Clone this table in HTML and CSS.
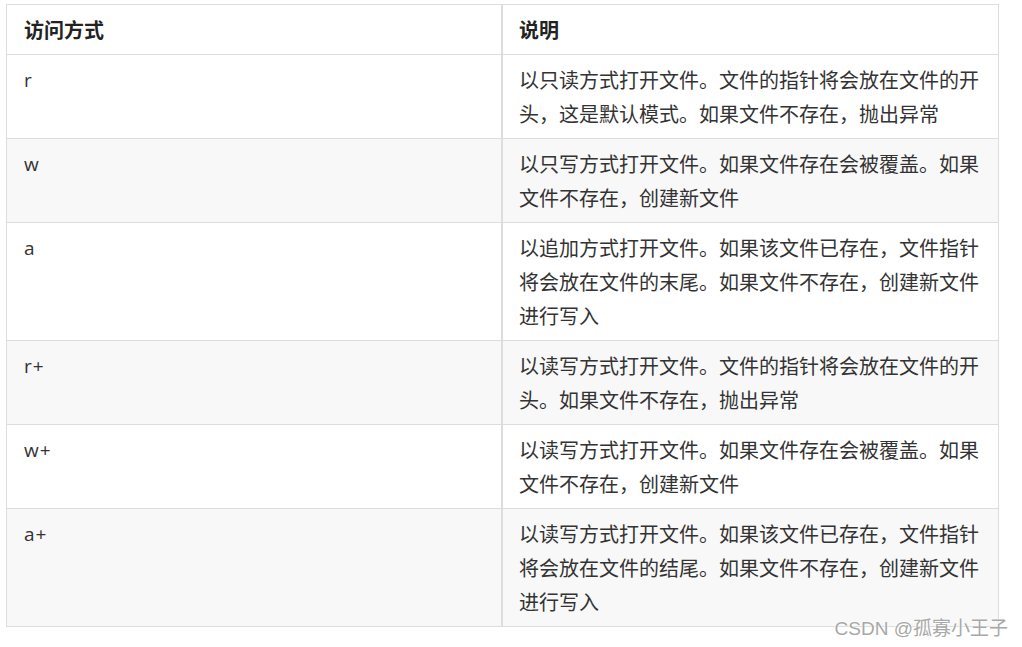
FILE: index.html
```html
<!DOCTYPE html>
<html lang="zh-CN">
<head>
<meta charset="utf-8">
<title>文件访问方式</title>
<link rel="stylesheet" href="styles.css">
</head>
<body>
<div class="page">
  <table class="modes">
    <thead>
      <tr><th>访问方式</th><th>说明</th></tr>
    </thead>
    <tbody>
      <tr><td>r</td><td>以只读方式打开文件。文件的指针将会放在文件的开头，这是默认模式。如果文件不存在，抛出异常</td></tr>
      <tr><td>w</td><td>以只写方式打开文件。如果文件存在会被覆盖。如果文件不存在，创建新文件</td></tr>
      <tr><td>a</td><td>以追加方式打开文件。如果该文件已存在，文件指针将会放在文件的末尾。如果文件不存在，创建新文件进行写入</td></tr>
      <tr><td>r+</td><td>以读写方式打开文件。文件的指针将会放在文件的开头。如果文件不存在，抛出异常</td></tr>
      <tr><td>w+</td><td>以读写方式打开文件。如果文件存在会被覆盖。如果文件不存在，创建新文件</td></tr>
      <tr><td>a+</td><td>以读写方式打开文件。如果该文件已存在，文件指针将会放在文件的结尾。如果文件不存在，创建新文件进行写入</td></tr>
    </tbody>
  </table>
  <div class="watermark">CSDN @孤寡小王子</div>
</div>
</body>
</html>
```

FILE: styles.css
```css
html, body {
  margin: 0;
  padding: 0;
  background: #fff;
}

.page {
  position: relative;
  width: 1022px;
  height: 647px;
  padding: 4px 0 0 6px;
  box-sizing: border-box;
}

.modes {
  border-collapse: collapse;
  width: 993px;
  table-layout: fixed;
  font-family: "Noto Sans CJK SC", "Microsoft YaHei", sans-serif;
  font-size: 20px;
  line-height: 34px;
  color: #333;
}

.modes th,
.modes td {
  border: 1px solid #ddd;
  padding: 8px 16px 7px 17px;
  text-align: left;
  vertical-align: top;
  word-break: break-all;
}

.modes th:first-child,
.modes td:first-child {
  border-right: 2px solid #ddd;
  width: 461px;
}

.modes th + th,
.modes td + td {
  padding-left: 16px;
}

.modes th {
  font-weight: 700;
  color: #222;
}

.modes td:first-child {
  font-family: "Open Sans", "Noto Sans CJK SC", sans-serif;
  font-size: 19px;
  letter-spacing: 1px;
  color: #333;
}

.modes tbody tr:nth-child(even) {
  background: #f8f8f8;
}

.watermark {
  position: absolute;
  right: 14px;
  bottom: 7px;
  font-family: "Liberation Sans", "Noto Sans CJK SC", sans-serif;
  font-size: 19px;
  line-height: 22px;
  color: #a8a8a8;
  text-shadow: 0 0 2px #fff, 0 0 2px #fff;
}
```
